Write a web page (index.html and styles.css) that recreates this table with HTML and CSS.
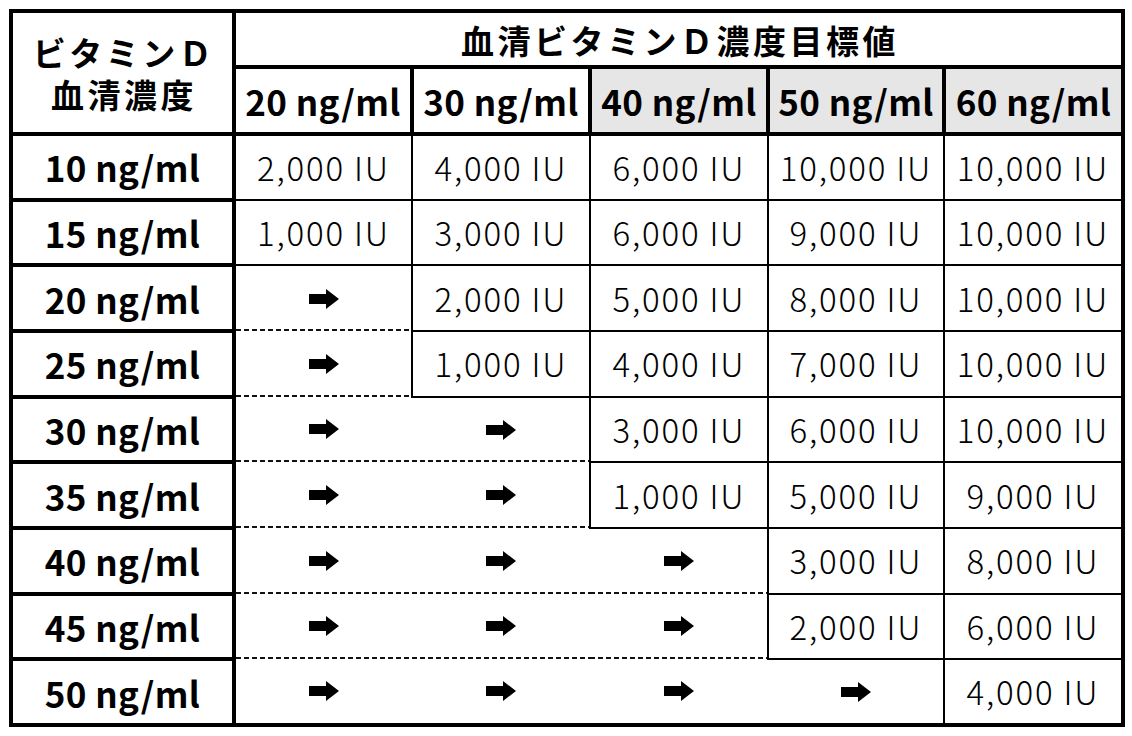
FILE: index.html
```html
<!DOCTYPE html>
<html lang="ja">
<head>
<meta charset="utf-8">
<title>ビタミンD 目標値</title>
<link rel="stylesheet" href="styles.css">
</head>
<body>
<svg width="0" height="0" class="defs" aria-hidden="true">
  <defs>
    <symbol id="arr" viewBox="0 0 30 20">
      <path d="M0 5H17V0L30 10L17 20V15H0Z" fill="#000"/>
    </symbol>
  </defs>
</svg>
<table class="dose">
  <colgroup>
    <col class="c-first">
    <col class="c-178">
    <col class="c-178">
    <col class="c-178">
    <col class="c-176">
    <col class="c-179">
  </colgroup>
  <thead>
    <tr class="h1">
      <th class="corner" rowspan="2"><span class="line">ビタミンＤ</span><span class="line">血清濃度</span></th>
      <th class="title" colspan="5">血清ビタミンＤ濃度目標値</th>
    </tr>
    <tr class="h2">
      <th class="target">20 ng/ml</th>
      <th class="target">30 ng/ml</th>
      <th class="target gray">40 ng/ml</th>
      <th class="target gray">50 ng/ml</th>
      <th class="target gray">60 ng/ml</th>
    </tr>
  </thead>
  <tbody>
    <tr>
      <th class="level">10 ng/ml</th>
      <td class="val">2,000 IU</td>
      <td class="val">4,000 IU</td>
      <td class="val">6,000 IU</td>
      <td class="val">10,000 IU</td>
      <td class="val">10,000 IU</td>
    </tr>
    <tr>
      <th class="level">15 ng/ml</th>
      <td class="val">1,000 IU</td>
      <td class="val">3,000 IU</td>
      <td class="val">6,000 IU</td>
      <td class="val">9,000 IU</td>
      <td class="val">10,000 IU</td>
    </tr>
    <tr>
      <th class="level">20 ng/ml</th>
      <td class="arrow dash"><svg class="ico"><use href="#arr"/></svg></td>
      <td class="val">2,000 IU</td>
      <td class="val">5,000 IU</td>
      <td class="val">8,000 IU</td>
      <td class="val">10,000 IU</td>
    </tr>
    <tr>
      <th class="level">25 ng/ml</th>
      <td class="arrow dash"><svg class="ico"><use href="#arr"/></svg></td>
      <td class="val">1,000 IU</td>
      <td class="val">4,000 IU</td>
      <td class="val">7,000 IU</td>
      <td class="val">10,000 IU</td>
    </tr>
    <tr>
      <th class="level">30 ng/ml</th>
      <td class="arrow dash"><svg class="ico"><use href="#arr"/></svg></td>
      <td class="arrow dash"><svg class="ico"><use href="#arr"/></svg></td>
      <td class="val">3,000 IU</td>
      <td class="val">6,000 IU</td>
      <td class="val">10,000 IU</td>
    </tr>
    <tr>
      <th class="level">35 ng/ml</th>
      <td class="arrow dash"><svg class="ico"><use href="#arr"/></svg></td>
      <td class="arrow dash"><svg class="ico"><use href="#arr"/></svg></td>
      <td class="val">1,000 IU</td>
      <td class="val">5,000 IU</td>
      <td class="val">9,000 IU</td>
    </tr>
    <tr>
      <th class="level">40 ng/ml</th>
      <td class="arrow dash"><svg class="ico"><use href="#arr"/></svg></td>
      <td class="arrow dash"><svg class="ico"><use href="#arr"/></svg></td>
      <td class="arrow dash"><svg class="ico"><use href="#arr"/></svg></td>
      <td class="val">3,000 IU</td>
      <td class="val">8,000 IU</td>
    </tr>
    <tr>
      <th class="level">45 ng/ml</th>
      <td class="arrow dash"><svg class="ico"><use href="#arr"/></svg></td>
      <td class="arrow dash"><svg class="ico"><use href="#arr"/></svg></td>
      <td class="arrow dash"><svg class="ico"><use href="#arr"/></svg></td>
      <td class="val">2,000 IU</td>
      <td class="val">6,000 IU</td>
    </tr>
    <tr>
      <th class="level">50 ng/ml</th>
      <td class="arrow"><svg class="ico"><use href="#arr"/></svg></td>
      <td class="arrow"><svg class="ico"><use href="#arr"/></svg></td>
      <td class="arrow"><svg class="ico"><use href="#arr"/></svg></td>
      <td class="arrow"><svg class="ico"><use href="#arr"/></svg></td>
      <td class="val">4,000 IU</td>
    </tr>
  </tbody>
</table>
</body>
</html>
```

FILE: styles.css
```css
html, body {
  margin: 0;
  padding: 0;
  background: #fff;
}

body {
  font-family: "Noto Sans CJK JP", "Noto Sans", sans-serif;
  color: #000;
}

.defs {
  position: absolute;
  width: 0;
  height: 0;
  overflow: hidden;
}

.dose {
  margin: 9px 0 0 9px;
  width: 1116px;
  table-layout: fixed;
  border-collapse: collapse;
  border: 4px solid #000;
}

.c-first { width: 223px; }
.c-178 { width: 178px; }
.c-176 { width: 176px; }
.c-179 { width: 179px; }

.h1 { height: 56px; }
.h2 { height: 67px; }
tbody tr { height: 65.67px; }

th, td {
  padding: 0;
  text-align: center;
  vertical-align: middle;
  white-space: nowrap;
}

.corner {
  border: 4px solid #000;
  font-size: 33px;
  font-weight: 700;
  letter-spacing: 3.5px;
  padding-left: 3px;
}

.corner .line {
  display: block;
  line-height: 42px;
}

.title {
  border: 4px solid #000;
  font-size: 33px;
  font-weight: 700;
  letter-spacing: 3.5px;
  line-height: 1;
  padding-top: 2px;
  padding-left: 3px;
}

.target {
  border: 4px solid #000;
  font-size: 35px;
  font-weight: 700;
  letter-spacing: 0.4px;
  line-height: 1;
}

.gray {
  background: #e6e6e6;
}

.level {
  border: 4px solid #000;
  font-size: 35px;
  font-weight: 700;
  letter-spacing: 0.4px;
  line-height: 1;
}

.val {
  border: 2px solid #000;
  font-size: 33px;
  font-weight: 300;
  letter-spacing: 1.8px;
  line-height: 1;
}

.arrow {
  border-left: none;
  border-right: none;
  border-top: none;
  border-bottom: none;
  line-height: 0;
}

.arrow.dash {
  background-image: repeating-linear-gradient(to right, #111 0 5px, transparent 5px 8px);
  background-size: 100% 2px;
  background-position: left bottom;
  background-repeat: no-repeat;
}

.ico {
  width: 30px;
  height: 20px;
  display: inline-block;
}
```
